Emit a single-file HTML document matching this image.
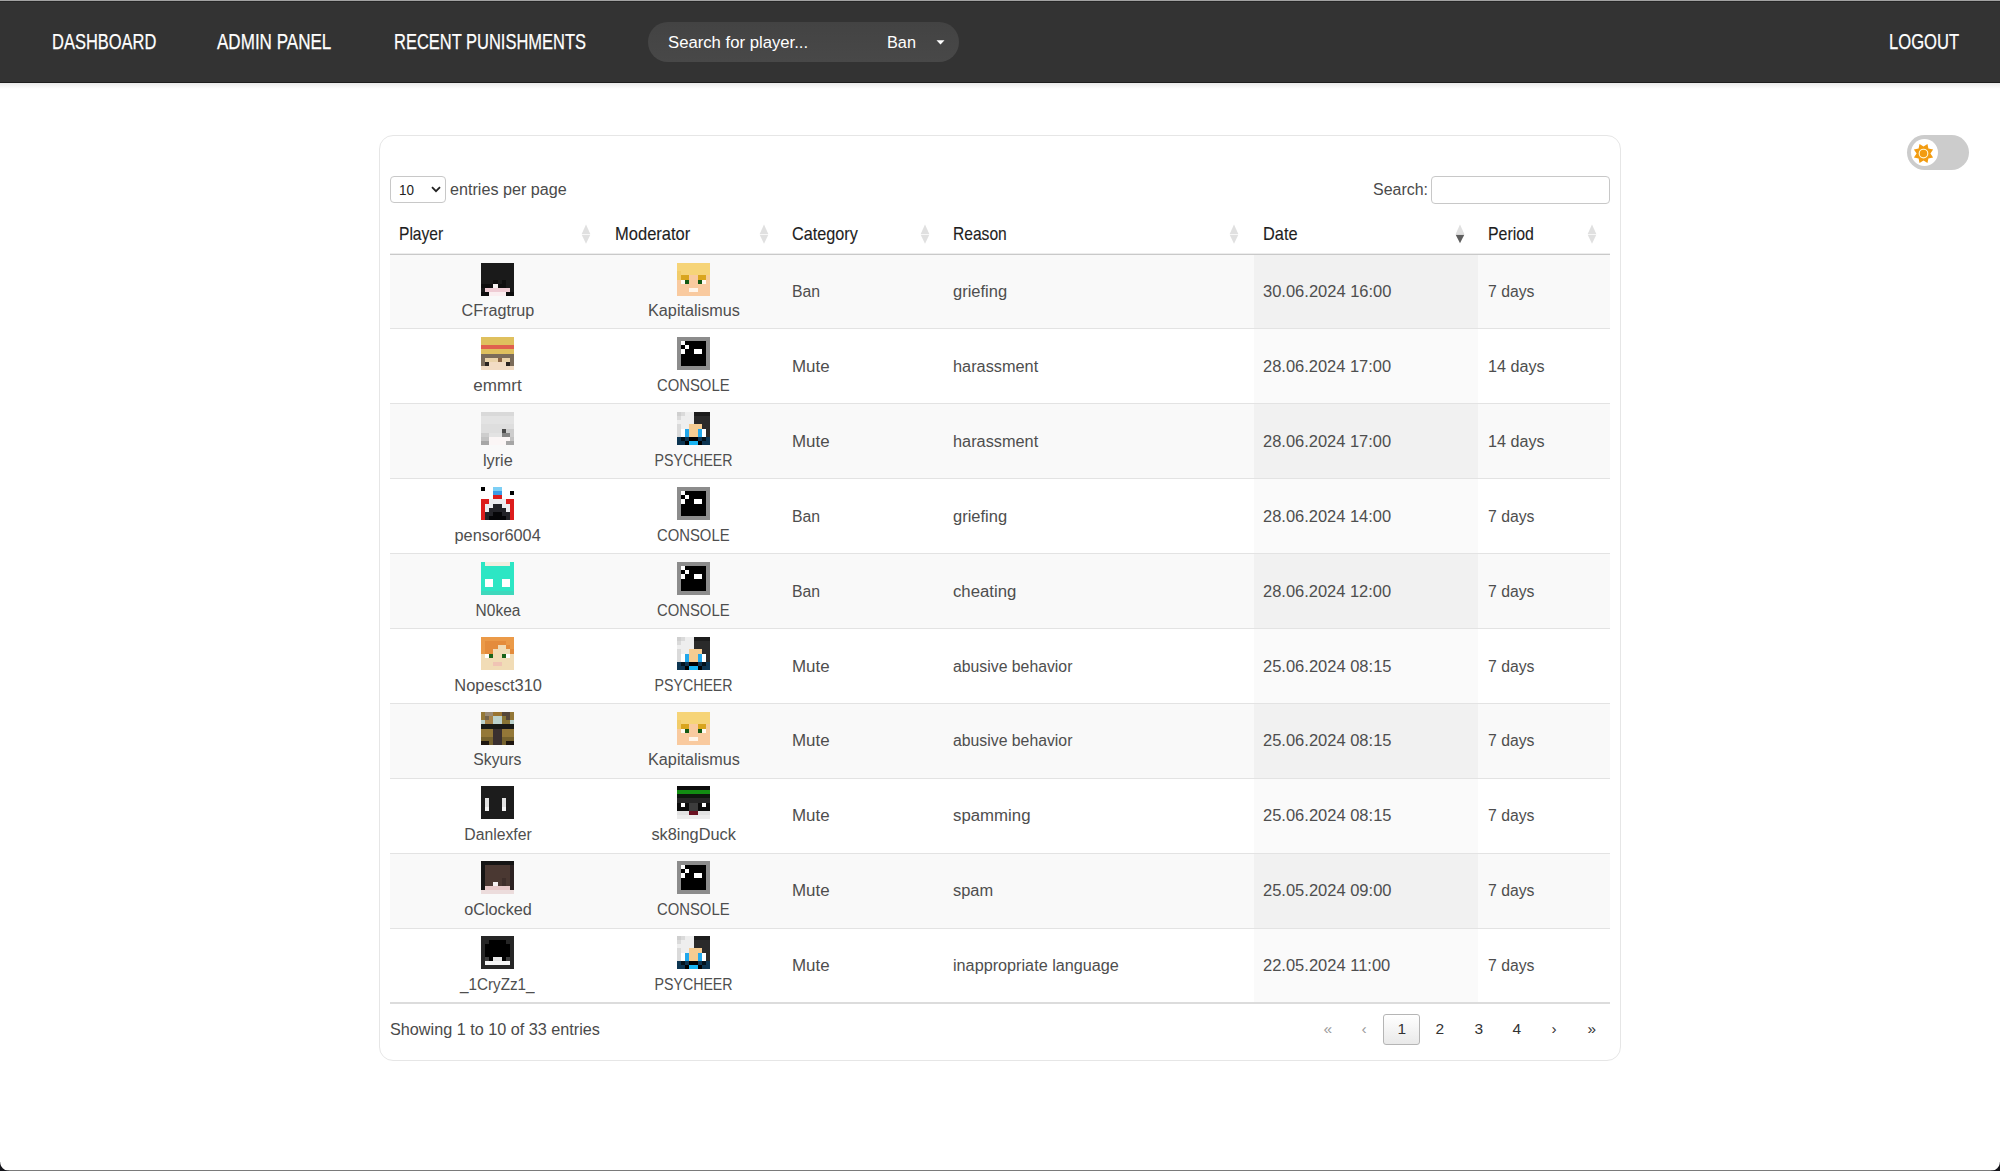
<!DOCTYPE html>
<html><head><meta charset="utf-8"><style>
html,body{margin:0;padding:0;width:2000px;height:1171px;overflow:hidden;background:#fff;font-family:"Liberation Sans",sans-serif;}
#root{position:relative;width:2000px;height:1171px;overflow:hidden;}
.nav{position:absolute;left:0;top:0;width:2000px;height:83px;background:#333333;}
.navtop{position:absolute;left:0;top:0;width:2000px;height:1px;background:#a3a3a3;}
.navtop2{position:absolute;left:0;top:1px;width:2000px;height:1px;background:#262626;}
.navbot{position:absolute;left:0;top:82px;width:2000px;height:1px;background:#1e1e1e;}
.shadow{position:absolute;left:0;top:83px;width:2000px;height:6px;background:linear-gradient(#eaeaea,#ffffff);}
.t{position:absolute;white-space:nowrap;line-height:0;}
.t span{display:inline-block;line-height:0;}
.pill{position:absolute;left:648px;top:22px;width:311px;height:40px;border-radius:20px;background:linear-gradient(#434343,#484848);}
.card{position:absolute;left:379px;top:135px;width:1240px;height:924px;border:1px solid #e6e6e6;border-radius:14px;background:#fff;}
.row{position:absolute;left:390px;width:1220px;}
.dcol{position:absolute;left:1254px;width:224px;}
.rb{position:absolute;left:390px;width:1220px;height:1px;background:#e3e3e3;}
.hb{position:absolute;left:390px;width:1220px;height:1px;top:254px;background:#c9c9c9;box-shadow:0 -1px 0 #ededed;}
.hb2{position:absolute;left:390px;width:1220px;height:2px;top:1002px;background:#dcdcdc;}
.av{position:absolute;}
.sel{position:absolute;left:390px;top:176px;width:54px;height:25px;border:1px solid #c8c8c8;border-radius:4px;background:#fff;}
.inp{position:absolute;left:1431px;top:176px;width:177px;height:26px;border:1px solid #c8c8c8;border-radius:4px;background:#fff;}
.pbox{position:absolute;left:1383px;top:1014px;width:35px;height:29px;border:1px solid #b5b5b5;border-radius:3px;background:linear-gradient(#ffffff,#e9e9e9);}
.tog{position:absolute;left:1907px;top:135px;width:62px;height:35px;border-radius:17.5px;background:#cccccc;}
.knob{position:absolute;left:1911px;top:139px;width:27px;height:27px;border-radius:50%;background:#fff;}
.arr{position:absolute;}
.bottomedge{position:absolute;left:0;top:1170px;width:2000px;height:1px;background:#7a7a7a;}
.cl{position:absolute;left:0;top:1162px;width:9px;height:9px;background:radial-gradient(circle at 9px 0px,rgba(255,255,255,0) 8.3px,#15151a 9.3px);}
.cr{position:absolute;left:1991px;top:1162px;width:9px;height:9px;background:radial-gradient(circle at 0px 0px,rgba(255,255,255,0) 8.3px,#15151a 9.3px);}
</style></head><body><div id="root">
<div class="nav"></div><div class="navtop"></div><div class="navtop2"></div><div class="navbot"></div><div class="shadow"></div>
<div class="t" style="left:51.6px;top:42.48px;font-size:21.7px;color:#ffffff;letter-spacing:0px;-webkit-text-stroke:0.25px #fff;"><span style="transform:scaleX(0.76);transform-origin:0 0">DASHBOARD</span></div>
<div class="t" style="left:216.8px;top:42.48px;font-size:21.7px;color:#ffffff;letter-spacing:0px;-webkit-text-stroke:0.25px #fff;"><span style="transform:scaleX(0.786);transform-origin:0 0">ADMIN PANEL</span></div>
<div class="t" style="left:393.6px;top:42.48px;font-size:21.7px;color:#ffffff;letter-spacing:0px;-webkit-text-stroke:0.25px #fff;"><span style="transform:scaleX(0.76);transform-origin:0 0">RECENT PUNISHMENTS</span></div>
<div class="t" style="left:1889px;top:42.48px;font-size:21.7px;color:#ffffff;letter-spacing:0px;-webkit-text-stroke:0.25px #fff;"><span style="transform:scaleX(0.765);transform-origin:0 0">LOGOUT</span></div>
<div class="pill"></div>
<div class="t" style="left:668px;top:42.88px;font-size:16.8px;color:#ffffff;letter-spacing:0px;"><span style="transform:scaleX(0.995);transform-origin:0 0">Search for player...</span></div>
<div class="t" style="left:886.5px;top:43.38px;font-size:16.8px;color:#ffffff;letter-spacing:0px;"><span style="transform:scaleX(0.97);transform-origin:0 0">Ban</span></div>
<svg class="arr" style="left:936px;top:40px" width="9" height="5" viewBox="0 0 9 5"><path d="M0.5 0.3 L8.5 0.3 L4.5 4.6 Z" fill="#fff"/></svg>
<div class="tog"></div><div class="knob"></div><svg class="arr" style="left:1903.1px;top:132.85px" width="41" height="41" viewBox="-20.5 -20.5 41 41"><path d="M3.98,-9.61 L4.88,-4.88 L9.61,-3.98 L6.90,0.00 L9.61,3.98 L4.88,4.88 L3.98,9.61 L0.00,6.90 L-3.98,9.61 L-4.88,4.88 L-9.61,3.98 L-6.90,0.00 L-9.61,-3.98 L-4.88,-4.88 L-3.98,-9.61 L-0.00,-6.90 Z" fill="#f29c11"/><circle cx="0" cy="0" r="4.3" fill="none" stroke="#fff8d8" stroke-width="1.15"/><circle cx="0" cy="0" r="3.2" fill="#f29c11"/></svg>
<div class="card"></div>
<div class="sel"></div>
<div class="t" style="left:399.3px;top:189.83px;font-size:15.5px;color:#222;letter-spacing:0px;"><span style="transform:scaleX(0.87);transform-origin:0 0">10</span></div>
<svg class="arr" style="left:431px;top:186px" width="10" height="7" viewBox="0 0 10 7"><path d="M1 1.2 L5 5.2 L9 1.2" stroke="#222" stroke-width="1.8" fill="none"/></svg>
<div class="t" style="left:449.6px;top:189.21px;font-size:17.3px;color:#4a4a4a;letter-spacing:0px;"><span style="transform:scaleX(0.934);transform-origin:0 0">entries per page</span></div>
<div class="t" style="left:1373.4px;top:189.41px;font-size:17.3px;color:#4a4a4a;letter-spacing:0px;"><span style="transform:scaleX(0.923);transform-origin:0 0">Search:</span></div>
<div class="inp"></div>
<div class="t" style="left:399.2px;top:233.59px;font-size:18.2px;color:#1e1e1e;letter-spacing:0px;-webkit-text-stroke:0.12px #1e1e1e;"><span style="transform:scaleX(0.857);transform-origin:0 0">Player</span></div>
<div class="t" style="left:614.6px;top:233.59px;font-size:18.2px;color:#1e1e1e;letter-spacing:0px;-webkit-text-stroke:0.12px #1e1e1e;"><span style="transform:scaleX(0.90842);transform-origin:0 0">Moderator</span></div>
<div class="t" style="left:792px;top:233.59px;font-size:18.2px;color:#1e1e1e;letter-spacing:0px;-webkit-text-stroke:0.12px #1e1e1e;"><span style="transform:scaleX(0.89128);transform-origin:0 0">Category</span></div>
<div class="t" style="left:953.2px;top:233.59px;font-size:18.2px;color:#1e1e1e;letter-spacing:0px;-webkit-text-stroke:0.12px #1e1e1e;"><span style="transform:scaleX(0.857);transform-origin:0 0">Reason</span></div>
<div class="t" style="left:1263px;top:233.59px;font-size:18.2px;color:#1e1e1e;letter-spacing:0px;-webkit-text-stroke:0.12px #1e1e1e;"><span style="transform:scaleX(0.89985);transform-origin:0 0">Date</span></div>
<div class="t" style="left:1488.2px;top:233.59px;font-size:18.2px;color:#1e1e1e;letter-spacing:0px;-webkit-text-stroke:0.12px #1e1e1e;"><span style="transform:scaleX(0.87414);transform-origin:0 0">Period</span></div>
<svg class="arr" style="left:581.20px;top:223.5px" width="10" height="21" viewBox="0 0 10 21"><path d="M5 0.6 L9.3 10.0 L0.7 10.0 Z" fill="#e0e0e0"/><path d="M0.7 10.8 L9.3 10.8 L5 19.8 Z" fill="#e0e0e0"/></svg><svg class="arr" style="left:758.50px;top:223.5px" width="10" height="21" viewBox="0 0 10 21"><path d="M5 0.6 L9.3 10.0 L0.7 10.0 Z" fill="#e0e0e0"/><path d="M0.7 10.8 L9.3 10.8 L5 19.8 Z" fill="#e0e0e0"/></svg><svg class="arr" style="left:920.00px;top:223.5px" width="10" height="21" viewBox="0 0 10 21"><path d="M5 0.6 L9.3 10.0 L0.7 10.0 Z" fill="#e0e0e0"/><path d="M0.7 10.8 L9.3 10.8 L5 19.8 Z" fill="#e0e0e0"/></svg><svg class="arr" style="left:1229.30px;top:223.5px" width="10" height="21" viewBox="0 0 10 21"><path d="M5 0.6 L9.3 10.0 L0.7 10.0 Z" fill="#e0e0e0"/><path d="M0.7 10.8 L9.3 10.8 L5 19.8 Z" fill="#e0e0e0"/></svg><svg class="arr" style="left:1454.80px;top:223.5px" width="10" height="21" viewBox="0 0 10 21"><path d="M5 0.6 L9.3 10.0 L0.7 10.0 Z" fill="#e0e0e0"/><path d="M0.7 10.8 L9.3 10.8 L5 19.3 Z" fill="#5e5e5e"/></svg><svg class="arr" style="left:1586.60px;top:223.5px" width="10" height="21" viewBox="0 0 10 21"><path d="M5 0.6 L9.3 10.0 L0.7 10.0 Z" fill="#e0e0e0"/><path d="M0.7 10.8 L9.3 10.8 L5 19.8 Z" fill="#e0e0e0"/></svg>
<div class="hb"></div>
<div class="row" style="top:255px;height:73px;background:#f9f9f9"></div>
<div class="dcol" style="top:255px;height:73px;background:#f1f1f1"></div>
<div class="rb" style="top:328px"></div>
<div class="row" style="top:329px;height:74px;background:#ffffff"></div>
<div class="dcol" style="top:329px;height:74px;background:#fafafa"></div>
<div class="rb" style="top:403px"></div>
<div class="row" style="top:404px;height:74px;background:#f9f9f9"></div>
<div class="dcol" style="top:404px;height:74px;background:#f1f1f1"></div>
<div class="rb" style="top:478px"></div>
<div class="row" style="top:479px;height:74px;background:#ffffff"></div>
<div class="dcol" style="top:479px;height:74px;background:#fafafa"></div>
<div class="rb" style="top:553px"></div>
<div class="row" style="top:554px;height:74px;background:#f9f9f9"></div>
<div class="dcol" style="top:554px;height:74px;background:#f1f1f1"></div>
<div class="rb" style="top:628px"></div>
<div class="row" style="top:629px;height:74px;background:#ffffff"></div>
<div class="dcol" style="top:629px;height:74px;background:#fafafa"></div>
<div class="rb" style="top:703px"></div>
<div class="row" style="top:704px;height:74px;background:#f9f9f9"></div>
<div class="dcol" style="top:704px;height:74px;background:#f1f1f1"></div>
<div class="rb" style="top:778px"></div>
<div class="row" style="top:779px;height:74px;background:#ffffff"></div>
<div class="dcol" style="top:779px;height:74px;background:#fafafa"></div>
<div class="rb" style="top:853px"></div>
<div class="row" style="top:854px;height:74px;background:#f9f9f9"></div>
<div class="dcol" style="top:854px;height:74px;background:#f1f1f1"></div>
<div class="rb" style="top:928px"></div>
<div class="row" style="top:929px;height:73px;background:#ffffff"></div>
<div class="dcol" style="top:929px;height:73px;background:#fafafa"></div>
<svg class="av" style="left:481px;top:263px" width="33" height="33" viewBox="0 0 8 8" shape-rendering="crispEdges"><rect x="0" y="0" width="8" height="1" fill="#1a1a1a"/><rect x="0" y="1" width="8" height="1" fill="#1a1a1a"/><rect x="0" y="2" width="8" height="1" fill="#1a1a1a"/><rect x="0" y="3" width="8" height="1" fill="#1a1a1a"/><rect x="0" y="4" width="3" height="1" fill="#1a1a1a"/><rect x="3" y="4" width="1" height="1" fill="#0e0e0e"/><rect x="4" y="4" width="1" height="1" fill="#1a1a1a"/><rect x="5" y="4" width="1" height="1" fill="#0e0e0e"/><rect x="6" y="4" width="2" height="1" fill="#1a1a1a"/><rect x="0" y="5" width="3" height="1" fill="#0e0e0e"/><rect x="3" y="5" width="1" height="1" fill="#f4f0f0"/><rect x="4" y="5" width="2" height="1" fill="#0e0e0e"/><rect x="6" y="5" width="2" height="1" fill="#1a1a1a"/><rect x="0" y="6" width="1" height="1" fill="#1a1a1a"/><rect x="1" y="6" width="6" height="1" fill="#efccd4"/><rect x="7" y="6" width="1" height="1" fill="#1a1a1a"/><rect x="0" y="7" width="2" height="1" fill="#0e0e0e"/><rect x="2" y="7" width="4" height="1" fill="#fbeef0"/><rect x="6" y="7" width="2" height="1" fill="#0e0e0e"/></svg>
<svg class="av" style="left:677px;top:263px" width="33" height="33" viewBox="0 0 8 8" shape-rendering="crispEdges"><rect x="0" y="0" width="8" height="1" fill="#f6d478"/><rect x="0" y="1" width="8" height="1" fill="#f6d478"/><rect x="0" y="2" width="1" height="1" fill="#f2cc6a"/><rect x="1" y="2" width="7" height="1" fill="#f6d478"/><rect x="0" y="3" width="1" height="1" fill="#f2cc6a"/><rect x="1" y="3" width="2" height="1" fill="#d9a51e"/><rect x="3" y="3" width="2" height="1" fill="#f9ca9f"/><rect x="5" y="3" width="2" height="1" fill="#d9a51e"/><rect x="7" y="3" width="1" height="1" fill="#f6cc96"/><rect x="0" y="4" width="1" height="1" fill="#f9ca9f"/><rect x="1" y="4" width="1" height="1" fill="#fffaf0"/><rect x="2" y="4" width="1" height="1" fill="#145a14"/><rect x="3" y="4" width="2" height="1" fill="#f9ca9f"/><rect x="5" y="4" width="1" height="1" fill="#145a14"/><rect x="6" y="4" width="1" height="1" fill="#fffaf0"/><rect x="7" y="4" width="1" height="1" fill="#f9ca9f"/><rect x="0" y="5" width="8" height="1" fill="#f9ca9f"/><rect x="0" y="6" width="3" height="1" fill="#f9ca9f"/><rect x="3" y="6" width="2" height="1" fill="#fff5ea"/><rect x="5" y="6" width="3" height="1" fill="#f9ca9f"/><rect x="0" y="7" width="8" height="1" fill="#f9ca9f"/></svg>
<div class="t" style="left:197.75px;width:600px;text-align:center;top:310.01px;font-size:17.3px;color:#4e4e4e;letter-spacing:0px;"><span style="transform:scaleX(0.9342);transform-origin:50% 0">CFragtrup</span></div>
<div class="t" style="left:393.5px;width:600px;text-align:center;top:310.01px;font-size:17.3px;color:#4e4e4e;letter-spacing:0px;"><span style="transform:scaleX(0.9381);transform-origin:50% 0">Kapitalismus</span></div>
<div class="t" style="left:791.8px;top:291.01px;font-size:17.3px;color:#4e4e4e;letter-spacing:0px;"><span style="transform:scaleX(0.9138);transform-origin:0 0">Ban</span></div>
<div class="t" style="left:953.3px;top:291.01px;font-size:17.3px;color:#4e4e4e;letter-spacing:0px;"><span style="transform:scaleX(0.9545);transform-origin:0 0">griefing</span></div>
<div class="t" style="left:1262.8px;top:291.01px;font-size:17.3px;color:#4e4e4e;letter-spacing:0px;"><span style="transform:scaleX(0.9549);transform-origin:0 0">30.06.2024 16:00</span></div>
<div class="t" style="left:1488.2px;top:291.01px;font-size:17.3px;color:#4e4e4e;letter-spacing:0px;"><span style="transform:scaleX(0.912);transform-origin:0 0">7 days</span></div>
<svg class="av" style="left:481px;top:337px" width="33" height="33" viewBox="0 0 8 8" shape-rendering="crispEdges"><rect x="0" y="0" width="8" height="1" fill="#dfc05e"/><rect x="0" y="1" width="8" height="1" fill="#dfc05e"/><rect x="0" y="2" width="8" height="1" fill="#e0604e"/><rect x="0" y="3" width="8" height="1" fill="#dfc05e"/><rect x="0" y="4" width="8" height="1" fill="#7b6c5a"/><rect x="0" y="5" width="1" height="1" fill="#7b6c5a"/><rect x="1" y="5" width="3" height="1" fill="#ead3aa"/><rect x="4" y="5" width="1" height="1" fill="#8a6444"/><rect x="5" y="5" width="2" height="1" fill="#ead3aa"/><rect x="7" y="5" width="1" height="1" fill="#7b6c5a"/><rect x="0" y="6" width="1" height="1" fill="#7b6c5a"/><rect x="1" y="6" width="1" height="1" fill="#2a2420"/><rect x="2" y="6" width="4" height="1" fill="#f2dcc4"/><rect x="6" y="6" width="1" height="1" fill="#2a2420"/><rect x="7" y="6" width="1" height="1" fill="#7b6c5a"/><rect x="0" y="7" width="8" height="1" fill="#f2dcc4"/></svg>
<svg class="av" style="left:677px;top:337px" width="33" height="33" viewBox="0 0 8 8" shape-rendering="crispEdges"><rect x="0" y="0" width="8" height="1" fill="#8c8c8c"/><rect x="0" y="1" width="1" height="1" fill="#8c8c8c"/><rect x="1" y="1" width="1" height="1" fill="#ffffff"/><rect x="2" y="1" width="5" height="1" fill="#000000"/><rect x="7" y="1" width="1" height="1" fill="#8c8c8c"/><rect x="0" y="2" width="1" height="1" fill="#8c8c8c"/><rect x="1" y="2" width="1" height="1" fill="#000000"/><rect x="2" y="2" width="1" height="1" fill="#ffffff"/><rect x="3" y="2" width="4" height="1" fill="#000000"/><rect x="7" y="2" width="1" height="1" fill="#8c8c8c"/><rect x="0" y="3" width="1" height="1" fill="#8c8c8c"/><rect x="1" y="3" width="1" height="1" fill="#ffffff"/><rect x="2" y="3" width="2" height="1" fill="#000000"/><rect x="4" y="3" width="2" height="1" fill="#ffffff"/><rect x="6" y="3" width="1" height="1" fill="#000000"/><rect x="7" y="3" width="1" height="1" fill="#8c8c8c"/><rect x="0" y="4" width="1" height="1" fill="#8c8c8c"/><rect x="1" y="4" width="6" height="1" fill="#000000"/><rect x="7" y="4" width="1" height="1" fill="#8c8c8c"/><rect x="0" y="5" width="1" height="1" fill="#8c8c8c"/><rect x="1" y="5" width="6" height="1" fill="#000000"/><rect x="7" y="5" width="1" height="1" fill="#8c8c8c"/><rect x="0" y="6" width="1" height="1" fill="#8c8c8c"/><rect x="1" y="6" width="6" height="1" fill="#000000"/><rect x="7" y="6" width="1" height="1" fill="#8c8c8c"/><rect x="0" y="7" width="8" height="1" fill="#8c8c8c"/></svg>
<div class="t" style="left:197.75px;width:600px;text-align:center;top:384.91px;font-size:17.3px;color:#4e4e4e;letter-spacing:0px;"><span style="transform:scaleX(0.9875);transform-origin:50% 0">emmrt</span></div>
<div class="t" style="left:393.5px;width:600px;text-align:center;top:384.91px;font-size:17.3px;color:#4e4e4e;letter-spacing:0px;"><span style="transform:scaleX(0.859);transform-origin:50% 0">CONSOLE</span></div>
<div class="t" style="left:791.8px;top:365.91px;font-size:17.3px;color:#4e4e4e;letter-spacing:0px;"><span style="transform:scaleX(0.9784);transform-origin:0 0">Mute</span></div>
<div class="t" style="left:953.3px;top:365.91px;font-size:17.3px;color:#4e4e4e;letter-spacing:0px;"><span style="transform:scaleX(0.9438);transform-origin:0 0">harassment</span></div>
<div class="t" style="left:1262.8px;top:365.91px;font-size:17.3px;color:#4e4e4e;letter-spacing:0px;"><span style="transform:scaleX(0.9526);transform-origin:0 0">28.06.2024 17:00</span></div>
<div class="t" style="left:1488.2px;top:365.91px;font-size:17.3px;color:#4e4e4e;letter-spacing:0px;"><span style="transform:scaleX(0.9356);transform-origin:0 0">14 days</span></div>
<svg class="av" style="left:481px;top:412px" width="33" height="33" viewBox="0 0 8 8" shape-rendering="crispEdges"><rect x="0" y="0" width="8" height="1" fill="#d9d9d9"/><rect x="0" y="1" width="8" height="1" fill="#e3e3e3"/><rect x="0" y="2" width="8" height="1" fill="#e3e3e3"/><rect x="0" y="3" width="8" height="1" fill="#dedede"/><rect x="0" y="4" width="5" height="1" fill="#dedede"/><rect x="5" y="4" width="1" height="1" fill="#4a4a4a"/><rect x="6" y="4" width="2" height="1" fill="#cdcdcd"/><rect x="0" y="5" width="2" height="1" fill="#cdcdcd"/><rect x="2" y="5" width="3" height="1" fill="#e3e3e3"/><rect x="5" y="5" width="2" height="1" fill="#858585"/><rect x="7" y="5" width="1" height="1" fill="#cdcdcd"/><rect x="0" y="6" width="2" height="1" fill="#c2c2c2"/><rect x="2" y="6" width="5" height="1" fill="#fbf6f6"/><rect x="7" y="6" width="1" height="1" fill="#c2c2c2"/><rect x="0" y="7" width="2" height="1" fill="#a6a6a6"/><rect x="2" y="7" width="4" height="1" fill="#fbf6f6"/><rect x="6" y="7" width="2" height="1" fill="#a6a6a6"/></svg>
<svg class="av" style="left:677px;top:412px" width="33" height="33" viewBox="0 0 8 8" shape-rendering="crispEdges"><rect x="0" y="0" width="1" height="1" fill="#cfcfcf"/><rect x="1" y="0" width="1" height="1" fill="#dadada"/><rect x="2" y="0" width="2" height="1" fill="#eeeeee"/><rect x="4" y="0" width="4" height="1" fill="#1c1c1c"/><rect x="0" y="1" width="1" height="1" fill="#dadada"/><rect x="1" y="1" width="3" height="1" fill="#eeeeee"/><rect x="4" y="1" width="4" height="1" fill="#2a2a2a"/><rect x="0" y="2" width="4" height="1" fill="#eeeeee"/><rect x="4" y="2" width="4" height="1" fill="#2a2a2a"/><rect x="0" y="3" width="1" height="1" fill="#dadada"/><rect x="1" y="3" width="2" height="1" fill="#eeeeee"/><rect x="3" y="3" width="3" height="1" fill="#f5cc92"/><rect x="6" y="3" width="2" height="1" fill="#2a2a2a"/><rect x="0" y="4" width="1" height="1" fill="#dadada"/><rect x="1" y="4" width="1" height="1" fill="#ffffff"/><rect x="2" y="4" width="1" height="1" fill="#22a8ec"/><rect x="3" y="4" width="2" height="1" fill="#f5cc92"/><rect x="5" y="4" width="1" height="1" fill="#22a8ec"/><rect x="6" y="4" width="1" height="1" fill="#ffffff"/><rect x="7" y="4" width="1" height="1" fill="#2a2a2a"/><rect x="0" y="5" width="1" height="1" fill="#dadada"/><rect x="1" y="5" width="1" height="1" fill="#ffffff"/><rect x="2" y="5" width="1" height="1" fill="#22a8ec"/><rect x="3" y="5" width="2" height="1" fill="#f5cc92"/><rect x="5" y="5" width="1" height="1" fill="#22a8ec"/><rect x="6" y="5" width="1" height="1" fill="#ffffff"/><rect x="7" y="5" width="1" height="1" fill="#2a2a2a"/><rect x="0" y="6" width="1" height="1" fill="#0c3552"/><rect x="1" y="6" width="1" height="1" fill="#03121c"/><rect x="2" y="6" width="1" height="1" fill="#0c3552"/><rect x="3" y="6" width="2" height="1" fill="#000000"/><rect x="5" y="6" width="1" height="1" fill="#0c3552"/><rect x="6" y="6" width="1" height="1" fill="#03121c"/><rect x="7" y="6" width="1" height="1" fill="#0c3552"/><rect x="0" y="7" width="2" height="1" fill="#0c3552"/><rect x="2" y="7" width="1" height="1" fill="#000000"/><rect x="3" y="7" width="2" height="1" fill="#18b4f2"/><rect x="5" y="7" width="1" height="1" fill="#000000"/><rect x="6" y="7" width="2" height="1" fill="#0c3552"/></svg>
<div class="t" style="left:197.75px;width:600px;text-align:center;top:459.81px;font-size:17.3px;color:#4e4e4e;letter-spacing:0px;"><span style="transform:scaleX(0.94);transform-origin:50% 0">lyrie</span></div>
<div class="t" style="left:393.5px;width:600px;text-align:center;top:459.81px;font-size:17.3px;color:#4e4e4e;letter-spacing:0px;"><span style="transform:scaleX(0.8215);transform-origin:50% 0">PSYCHEER</span></div>
<div class="t" style="left:791.8px;top:440.81px;font-size:17.3px;color:#4e4e4e;letter-spacing:0px;"><span style="transform:scaleX(0.9784);transform-origin:0 0">Mute</span></div>
<div class="t" style="left:953.3px;top:440.81px;font-size:17.3px;color:#4e4e4e;letter-spacing:0px;"><span style="transform:scaleX(0.9438);transform-origin:0 0">harassment</span></div>
<div class="t" style="left:1262.8px;top:440.81px;font-size:17.3px;color:#4e4e4e;letter-spacing:0px;"><span style="transform:scaleX(0.9526);transform-origin:0 0">28.06.2024 17:00</span></div>
<div class="t" style="left:1488.2px;top:440.81px;font-size:17.3px;color:#4e4e4e;letter-spacing:0px;"><span style="transform:scaleX(0.9356);transform-origin:0 0">14 days</span></div>
<svg class="av" style="left:481px;top:487px" width="33" height="33" viewBox="0 0 8 8" shape-rendering="crispEdges"><rect x="0" y="0" width="1" height="1" fill="#000000"/><rect x="3" y="0" width="2" height="1" fill="#7dcff5"/><rect x="3" y="1" width="2" height="1" fill="#3b9be6"/><rect x="7" y="1" width="1" height="1" fill="#000000"/><rect x="3" y="2" width="2" height="1" fill="#dc1c1c"/><rect x="0" y="3" width="2" height="1" fill="#dc1c1c"/><rect x="2" y="3" width="4" height="1" fill="#ececf0"/><rect x="6" y="3" width="2" height="1" fill="#dc1c1c"/><rect x="0" y="4" width="1" height="1" fill="#dc1c1c"/><rect x="1" y="4" width="2" height="1" fill="#ececf0"/><rect x="3" y="4" width="2" height="1" fill="#222228"/><rect x="5" y="4" width="2" height="1" fill="#ececf0"/><rect x="7" y="4" width="1" height="1" fill="#dc1c1c"/><rect x="0" y="5" width="1" height="1" fill="#dc1c1c"/><rect x="1" y="5" width="1" height="1" fill="#ececf0"/><rect x="2" y="5" width="4" height="1" fill="#222228"/><rect x="6" y="5" width="1" height="1" fill="#ececf0"/><rect x="7" y="5" width="1" height="1" fill="#dc1c1c"/><rect x="0" y="6" width="1" height="1" fill="#dc1c1c"/><rect x="1" y="6" width="2" height="1" fill="#222228"/><rect x="3" y="6" width="2" height="1" fill="#050508"/><rect x="5" y="6" width="2" height="1" fill="#222228"/><rect x="7" y="6" width="1" height="1" fill="#dc1c1c"/><rect x="0" y="7" width="1" height="1" fill="#dc1c1c"/><rect x="1" y="7" width="1" height="1" fill="#222228"/><rect x="2" y="7" width="4" height="1" fill="#050508"/><rect x="6" y="7" width="1" height="1" fill="#222228"/><rect x="7" y="7" width="1" height="1" fill="#dc1c1c"/></svg>
<svg class="av" style="left:677px;top:487px" width="33" height="33" viewBox="0 0 8 8" shape-rendering="crispEdges"><rect x="0" y="0" width="8" height="1" fill="#8c8c8c"/><rect x="0" y="1" width="1" height="1" fill="#8c8c8c"/><rect x="1" y="1" width="1" height="1" fill="#ffffff"/><rect x="2" y="1" width="5" height="1" fill="#000000"/><rect x="7" y="1" width="1" height="1" fill="#8c8c8c"/><rect x="0" y="2" width="1" height="1" fill="#8c8c8c"/><rect x="1" y="2" width="1" height="1" fill="#000000"/><rect x="2" y="2" width="1" height="1" fill="#ffffff"/><rect x="3" y="2" width="4" height="1" fill="#000000"/><rect x="7" y="2" width="1" height="1" fill="#8c8c8c"/><rect x="0" y="3" width="1" height="1" fill="#8c8c8c"/><rect x="1" y="3" width="1" height="1" fill="#ffffff"/><rect x="2" y="3" width="2" height="1" fill="#000000"/><rect x="4" y="3" width="2" height="1" fill="#ffffff"/><rect x="6" y="3" width="1" height="1" fill="#000000"/><rect x="7" y="3" width="1" height="1" fill="#8c8c8c"/><rect x="0" y="4" width="1" height="1" fill="#8c8c8c"/><rect x="1" y="4" width="6" height="1" fill="#000000"/><rect x="7" y="4" width="1" height="1" fill="#8c8c8c"/><rect x="0" y="5" width="1" height="1" fill="#8c8c8c"/><rect x="1" y="5" width="6" height="1" fill="#000000"/><rect x="7" y="5" width="1" height="1" fill="#8c8c8c"/><rect x="0" y="6" width="1" height="1" fill="#8c8c8c"/><rect x="1" y="6" width="6" height="1" fill="#000000"/><rect x="7" y="6" width="1" height="1" fill="#8c8c8c"/><rect x="0" y="7" width="8" height="1" fill="#8c8c8c"/></svg>
<div class="t" style="left:197.75px;width:600px;text-align:center;top:534.71px;font-size:17.3px;color:#4e4e4e;letter-spacing:0px;"><span style="transform:scaleX(0.9444);transform-origin:50% 0">pensor6004</span></div>
<div class="t" style="left:393.5px;width:600px;text-align:center;top:534.71px;font-size:17.3px;color:#4e4e4e;letter-spacing:0px;"><span style="transform:scaleX(0.859);transform-origin:50% 0">CONSOLE</span></div>
<div class="t" style="left:791.8px;top:515.71px;font-size:17.3px;color:#4e4e4e;letter-spacing:0px;"><span style="transform:scaleX(0.9138);transform-origin:0 0">Ban</span></div>
<div class="t" style="left:953.3px;top:515.71px;font-size:17.3px;color:#4e4e4e;letter-spacing:0px;"><span style="transform:scaleX(0.9545);transform-origin:0 0">griefing</span></div>
<div class="t" style="left:1262.8px;top:515.71px;font-size:17.3px;color:#4e4e4e;letter-spacing:0px;"><span style="transform:scaleX(0.9526);transform-origin:0 0">28.06.2024 14:00</span></div>
<div class="t" style="left:1488.2px;top:515.71px;font-size:17.3px;color:#4e4e4e;letter-spacing:0px;"><span style="transform:scaleX(0.912);transform-origin:0 0">7 days</span></div>
<svg class="av" style="left:481px;top:562px" width="33" height="33" viewBox="0 0 8 8" shape-rendering="crispEdges"><rect x="0" y="0" width="1" height="1" fill="#2de6c4"/><rect x="1" y="0" width="6" height="1" fill="#f3eee0"/><rect x="7" y="0" width="1" height="1" fill="#2de6c4"/><rect x="0" y="1" width="8" height="1" fill="#2de6c4"/><rect x="0" y="2" width="8" height="1" fill="#2de6c4"/><rect x="0" y="3" width="8" height="1" fill="#2de6c4"/><rect x="0" y="4" width="1" height="1" fill="#2de6c4"/><rect x="1" y="4" width="2" height="1" fill="#ffffff"/><rect x="3" y="4" width="2" height="1" fill="#2de6c4"/><rect x="5" y="4" width="2" height="1" fill="#ffffff"/><rect x="7" y="4" width="1" height="1" fill="#2de6c4"/><rect x="0" y="5" width="1" height="1" fill="#2de6c4"/><rect x="1" y="5" width="2" height="1" fill="#ffffff"/><rect x="3" y="5" width="2" height="1" fill="#2de6c4"/><rect x="5" y="5" width="2" height="1" fill="#ffffff"/><rect x="7" y="5" width="1" height="1" fill="#2de6c4"/><rect x="0" y="6" width="8" height="1" fill="#2de6c4"/><rect x="0" y="7" width="8" height="1" fill="#3ed8bc"/></svg>
<svg class="av" style="left:677px;top:562px" width="33" height="33" viewBox="0 0 8 8" shape-rendering="crispEdges"><rect x="0" y="0" width="8" height="1" fill="#8c8c8c"/><rect x="0" y="1" width="1" height="1" fill="#8c8c8c"/><rect x="1" y="1" width="1" height="1" fill="#ffffff"/><rect x="2" y="1" width="5" height="1" fill="#000000"/><rect x="7" y="1" width="1" height="1" fill="#8c8c8c"/><rect x="0" y="2" width="1" height="1" fill="#8c8c8c"/><rect x="1" y="2" width="1" height="1" fill="#000000"/><rect x="2" y="2" width="1" height="1" fill="#ffffff"/><rect x="3" y="2" width="4" height="1" fill="#000000"/><rect x="7" y="2" width="1" height="1" fill="#8c8c8c"/><rect x="0" y="3" width="1" height="1" fill="#8c8c8c"/><rect x="1" y="3" width="1" height="1" fill="#ffffff"/><rect x="2" y="3" width="2" height="1" fill="#000000"/><rect x="4" y="3" width="2" height="1" fill="#ffffff"/><rect x="6" y="3" width="1" height="1" fill="#000000"/><rect x="7" y="3" width="1" height="1" fill="#8c8c8c"/><rect x="0" y="4" width="1" height="1" fill="#8c8c8c"/><rect x="1" y="4" width="6" height="1" fill="#000000"/><rect x="7" y="4" width="1" height="1" fill="#8c8c8c"/><rect x="0" y="5" width="1" height="1" fill="#8c8c8c"/><rect x="1" y="5" width="6" height="1" fill="#000000"/><rect x="7" y="5" width="1" height="1" fill="#8c8c8c"/><rect x="0" y="6" width="1" height="1" fill="#8c8c8c"/><rect x="1" y="6" width="6" height="1" fill="#000000"/><rect x="7" y="6" width="1" height="1" fill="#8c8c8c"/><rect x="0" y="7" width="8" height="1" fill="#8c8c8c"/></svg>
<div class="t" style="left:197.75px;width:600px;text-align:center;top:609.61px;font-size:17.3px;color:#4e4e4e;letter-spacing:0px;"><span style="transform:scaleX(0.8959);transform-origin:50% 0">N0kea</span></div>
<div class="t" style="left:393.5px;width:600px;text-align:center;top:609.61px;font-size:17.3px;color:#4e4e4e;letter-spacing:0px;"><span style="transform:scaleX(0.859);transform-origin:50% 0">CONSOLE</span></div>
<div class="t" style="left:791.8px;top:590.61px;font-size:17.3px;color:#4e4e4e;letter-spacing:0px;"><span style="transform:scaleX(0.9138);transform-origin:0 0">Ban</span></div>
<div class="t" style="left:953.3px;top:590.61px;font-size:17.3px;color:#4e4e4e;letter-spacing:0px;"><span style="transform:scaleX(0.9683);transform-origin:0 0">cheating</span></div>
<div class="t" style="left:1262.8px;top:590.61px;font-size:17.3px;color:#4e4e4e;letter-spacing:0px;"><span style="transform:scaleX(0.9526);transform-origin:0 0">28.06.2024 12:00</span></div>
<div class="t" style="left:1488.2px;top:590.61px;font-size:17.3px;color:#4e4e4e;letter-spacing:0px;"><span style="transform:scaleX(0.912);transform-origin:0 0">7 days</span></div>
<svg class="av" style="left:481px;top:637px" width="33" height="33" viewBox="0 0 8 8" shape-rendering="crispEdges"><rect x="0" y="0" width="8" height="1" fill="#eb9a48"/><rect x="0" y="1" width="1" height="1" fill="#eb9a48"/><rect x="1" y="1" width="5" height="1" fill="#e48c3c"/><rect x="6" y="1" width="2" height="1" fill="#eb9a48"/><rect x="0" y="2" width="1" height="1" fill="#eb9a48"/><rect x="1" y="2" width="3" height="1" fill="#e48c3c"/><rect x="4" y="2" width="2" height="1" fill="#f1dcb6"/><rect x="6" y="2" width="1" height="1" fill="#e48c3c"/><rect x="7" y="2" width="1" height="1" fill="#eb9a48"/><rect x="0" y="3" width="1" height="1" fill="#eb9a48"/><rect x="1" y="3" width="2" height="1" fill="#e48c3c"/><rect x="3" y="3" width="4" height="1" fill="#f1dcb6"/><rect x="7" y="3" width="1" height="1" fill="#e48c3c"/><rect x="0" y="4" width="1" height="1" fill="#f1dcb6"/><rect x="1" y="4" width="1" height="1" fill="#ffffff"/><rect x="2" y="4" width="1" height="1" fill="#1a641a"/><rect x="3" y="4" width="2" height="1" fill="#f1dcb6"/><rect x="5" y="4" width="1" height="1" fill="#1a641a"/><rect x="6" y="4" width="1" height="1" fill="#ffffff"/><rect x="7" y="4" width="1" height="1" fill="#f1dcb6"/><rect x="0" y="5" width="8" height="1" fill="#f1dcb6"/><rect x="0" y="6" width="3" height="1" fill="#f1dcb6"/><rect x="3" y="6" width="2" height="1" fill="#f0c4b4"/><rect x="5" y="6" width="3" height="1" fill="#f1dcb6"/><rect x="0" y="7" width="8" height="1" fill="#f1dcb6"/></svg>
<svg class="av" style="left:677px;top:637px" width="33" height="33" viewBox="0 0 8 8" shape-rendering="crispEdges"><rect x="0" y="0" width="1" height="1" fill="#cfcfcf"/><rect x="1" y="0" width="1" height="1" fill="#dadada"/><rect x="2" y="0" width="2" height="1" fill="#eeeeee"/><rect x="4" y="0" width="4" height="1" fill="#1c1c1c"/><rect x="0" y="1" width="1" height="1" fill="#dadada"/><rect x="1" y="1" width="3" height="1" fill="#eeeeee"/><rect x="4" y="1" width="4" height="1" fill="#2a2a2a"/><rect x="0" y="2" width="4" height="1" fill="#eeeeee"/><rect x="4" y="2" width="4" height="1" fill="#2a2a2a"/><rect x="0" y="3" width="1" height="1" fill="#dadada"/><rect x="1" y="3" width="2" height="1" fill="#eeeeee"/><rect x="3" y="3" width="3" height="1" fill="#f5cc92"/><rect x="6" y="3" width="2" height="1" fill="#2a2a2a"/><rect x="0" y="4" width="1" height="1" fill="#dadada"/><rect x="1" y="4" width="1" height="1" fill="#ffffff"/><rect x="2" y="4" width="1" height="1" fill="#22a8ec"/><rect x="3" y="4" width="2" height="1" fill="#f5cc92"/><rect x="5" y="4" width="1" height="1" fill="#22a8ec"/><rect x="6" y="4" width="1" height="1" fill="#ffffff"/><rect x="7" y="4" width="1" height="1" fill="#2a2a2a"/><rect x="0" y="5" width="1" height="1" fill="#dadada"/><rect x="1" y="5" width="1" height="1" fill="#ffffff"/><rect x="2" y="5" width="1" height="1" fill="#22a8ec"/><rect x="3" y="5" width="2" height="1" fill="#f5cc92"/><rect x="5" y="5" width="1" height="1" fill="#22a8ec"/><rect x="6" y="5" width="1" height="1" fill="#ffffff"/><rect x="7" y="5" width="1" height="1" fill="#2a2a2a"/><rect x="0" y="6" width="1" height="1" fill="#0c3552"/><rect x="1" y="6" width="1" height="1" fill="#03121c"/><rect x="2" y="6" width="1" height="1" fill="#0c3552"/><rect x="3" y="6" width="2" height="1" fill="#000000"/><rect x="5" y="6" width="1" height="1" fill="#0c3552"/><rect x="6" y="6" width="1" height="1" fill="#03121c"/><rect x="7" y="6" width="1" height="1" fill="#0c3552"/><rect x="0" y="7" width="2" height="1" fill="#0c3552"/><rect x="2" y="7" width="1" height="1" fill="#000000"/><rect x="3" y="7" width="2" height="1" fill="#18b4f2"/><rect x="5" y="7" width="1" height="1" fill="#000000"/><rect x="6" y="7" width="2" height="1" fill="#0c3552"/></svg>
<div class="t" style="left:197.75px;width:600px;text-align:center;top:684.51px;font-size:17.3px;color:#4e4e4e;letter-spacing:0px;"><span style="transform:scaleX(0.9495);transform-origin:50% 0">Nopesct310</span></div>
<div class="t" style="left:393.5px;width:600px;text-align:center;top:684.51px;font-size:17.3px;color:#4e4e4e;letter-spacing:0px;"><span style="transform:scaleX(0.8215);transform-origin:50% 0">PSYCHEER</span></div>
<div class="t" style="left:791.8px;top:665.51px;font-size:17.3px;color:#4e4e4e;letter-spacing:0px;"><span style="transform:scaleX(0.9784);transform-origin:0 0">Mute</span></div>
<div class="t" style="left:953.3px;top:665.51px;font-size:17.3px;color:#4e4e4e;letter-spacing:0px;"><span style="transform:scaleX(0.9138);transform-origin:0 0">abusive behavior</span></div>
<div class="t" style="left:1262.8px;top:665.51px;font-size:17.3px;color:#4e4e4e;letter-spacing:0px;"><span style="transform:scaleX(0.955);transform-origin:0 0">25.06.2024 08:15</span></div>
<div class="t" style="left:1488.2px;top:665.51px;font-size:17.3px;color:#4e4e4e;letter-spacing:0px;"><span style="transform:scaleX(0.912);transform-origin:0 0">7 days</span></div>
<svg class="av" style="left:481px;top:712px" width="33" height="33" viewBox="0 0 8 8" shape-rendering="crispEdges"><rect x="0" y="0" width="1" height="1" fill="#947838"/><rect x="1" y="0" width="2" height="1" fill="#9a8a74"/><rect x="3" y="0" width="2" height="1" fill="#9a7430"/><rect x="5" y="0" width="2" height="1" fill="#54463a"/><rect x="7" y="0" width="1" height="1" fill="#947838"/><rect x="0" y="1" width="1" height="1" fill="#947838"/><rect x="1" y="1" width="1" height="1" fill="#74644c"/><rect x="2" y="1" width="1" height="1" fill="#a8844a"/><rect x="3" y="1" width="2" height="1" fill="#bcd2cc"/><rect x="5" y="1" width="1" height="1" fill="#887434"/><rect x="6" y="1" width="1" height="1" fill="#54463a"/><rect x="7" y="1" width="1" height="1" fill="#947838"/><rect x="0" y="2" width="1" height="1" fill="#bcd2cc"/><rect x="1" y="2" width="2" height="1" fill="#a8844a"/><rect x="3" y="2" width="2" height="1" fill="#bcd2cc"/><rect x="5" y="2" width="2" height="1" fill="#887434"/><rect x="7" y="2" width="1" height="1" fill="#bcd2cc"/><rect x="0" y="3" width="8" height="1" fill="#1a1a16"/><rect x="0" y="4" width="3" height="1" fill="#947838"/><rect x="3" y="4" width="2" height="1" fill="#3a3030"/><rect x="5" y="4" width="3" height="1" fill="#947838"/><rect x="0" y="5" width="3" height="1" fill="#947838"/><rect x="3" y="5" width="2" height="1" fill="#3a3030"/><rect x="5" y="5" width="3" height="1" fill="#947838"/><rect x="0" y="6" width="3" height="1" fill="#76622e"/><rect x="3" y="6" width="2" height="1" fill="#3a3030"/><rect x="5" y="6" width="3" height="1" fill="#76622e"/><rect x="0" y="7" width="2" height="1" fill="#1e1610"/><rect x="2" y="7" width="1" height="1" fill="#76622e"/><rect x="3" y="7" width="2" height="1" fill="#3a3030"/><rect x="5" y="7" width="1" height="1" fill="#76622e"/><rect x="6" y="7" width="2" height="1" fill="#1e1610"/></svg>
<svg class="av" style="left:677px;top:712px" width="33" height="33" viewBox="0 0 8 8" shape-rendering="crispEdges"><rect x="0" y="0" width="8" height="1" fill="#f6d478"/><rect x="0" y="1" width="8" height="1" fill="#f6d478"/><rect x="0" y="2" width="1" height="1" fill="#f2cc6a"/><rect x="1" y="2" width="7" height="1" fill="#f6d478"/><rect x="0" y="3" width="1" height="1" fill="#f2cc6a"/><rect x="1" y="3" width="2" height="1" fill="#d9a51e"/><rect x="3" y="3" width="2" height="1" fill="#f9ca9f"/><rect x="5" y="3" width="2" height="1" fill="#d9a51e"/><rect x="7" y="3" width="1" height="1" fill="#f6cc96"/><rect x="0" y="4" width="1" height="1" fill="#f9ca9f"/><rect x="1" y="4" width="1" height="1" fill="#fffaf0"/><rect x="2" y="4" width="1" height="1" fill="#145a14"/><rect x="3" y="4" width="2" height="1" fill="#f9ca9f"/><rect x="5" y="4" width="1" height="1" fill="#145a14"/><rect x="6" y="4" width="1" height="1" fill="#fffaf0"/><rect x="7" y="4" width="1" height="1" fill="#f9ca9f"/><rect x="0" y="5" width="8" height="1" fill="#f9ca9f"/><rect x="0" y="6" width="3" height="1" fill="#f9ca9f"/><rect x="3" y="6" width="2" height="1" fill="#fff5ea"/><rect x="5" y="6" width="3" height="1" fill="#f9ca9f"/><rect x="0" y="7" width="8" height="1" fill="#f9ca9f"/></svg>
<div class="t" style="left:197.75px;width:600px;text-align:center;top:759.41px;font-size:17.3px;color:#4e4e4e;letter-spacing:0px;"><span style="transform:scaleX(0.9115);transform-origin:50% 0">Skyurs</span></div>
<div class="t" style="left:393.5px;width:600px;text-align:center;top:759.41px;font-size:17.3px;color:#4e4e4e;letter-spacing:0px;"><span style="transform:scaleX(0.9381);transform-origin:50% 0">Kapitalismus</span></div>
<div class="t" style="left:791.8px;top:740.41px;font-size:17.3px;color:#4e4e4e;letter-spacing:0px;"><span style="transform:scaleX(0.9784);transform-origin:0 0">Mute</span></div>
<div class="t" style="left:953.3px;top:740.41px;font-size:17.3px;color:#4e4e4e;letter-spacing:0px;"><span style="transform:scaleX(0.9138);transform-origin:0 0">abusive behavior</span></div>
<div class="t" style="left:1262.8px;top:740.41px;font-size:17.3px;color:#4e4e4e;letter-spacing:0px;"><span style="transform:scaleX(0.955);transform-origin:0 0">25.06.2024 08:15</span></div>
<div class="t" style="left:1488.2px;top:740.41px;font-size:17.3px;color:#4e4e4e;letter-spacing:0px;"><span style="transform:scaleX(0.912);transform-origin:0 0">7 days</span></div>
<svg class="av" style="left:481px;top:786px" width="33" height="33" viewBox="0 0 8 8" shape-rendering="crispEdges"><rect x="0" y="0" width="8" height="1" fill="#1c1c1c"/><rect x="0" y="1" width="8" height="1" fill="#1c1c1c"/><rect x="0" y="2" width="8" height="1" fill="#1c1c1c"/><rect x="0" y="3" width="1" height="1" fill="#1c1c1c"/><rect x="1" y="3" width="1" height="1" fill="#e2e2e2"/><rect x="2" y="3" width="3" height="1" fill="#1c1c1c"/><rect x="5" y="3" width="1" height="1" fill="#e2e2e2"/><rect x="6" y="3" width="2" height="1" fill="#1c1c1c"/><rect x="0" y="4" width="1" height="1" fill="#1c1c1c"/><rect x="1" y="4" width="1" height="1" fill="#e2e2e2"/><rect x="2" y="4" width="3" height="1" fill="#1c1c1c"/><rect x="5" y="4" width="1" height="1" fill="#e2e2e2"/><rect x="6" y="4" width="2" height="1" fill="#1c1c1c"/><rect x="0" y="5" width="1" height="1" fill="#1c1c1c"/><rect x="1" y="5" width="1" height="1" fill="#f4f4f4"/><rect x="2" y="5" width="3" height="1" fill="#1c1c1c"/><rect x="5" y="5" width="1" height="1" fill="#f4f4f4"/><rect x="6" y="5" width="2" height="1" fill="#1c1c1c"/><rect x="0" y="6" width="8" height="1" fill="#1c1c1c"/><rect x="0" y="7" width="8" height="1" fill="#1c1c1c"/></svg>
<svg class="av" style="left:677px;top:786px" width="33" height="33" viewBox="0 0 8 8" shape-rendering="crispEdges"><rect x="0" y="0" width="8" height="1" fill="#0c0c0c"/><rect x="0" y="1" width="8" height="1" fill="#128c12"/><rect x="0" y="2" width="8" height="1" fill="#0e160e"/><rect x="0" y="3" width="8" height="1" fill="#262626"/><rect x="0" y="4" width="1" height="1" fill="#0c0c0c"/><rect x="1" y="4" width="1" height="1" fill="#ffffff"/><rect x="2" y="4" width="1" height="1" fill="#0c0c0c"/><rect x="3" y="4" width="2" height="1" fill="#3c3c3c"/><rect x="5" y="4" width="1" height="1" fill="#0c0c0c"/><rect x="6" y="4" width="1" height="1" fill="#ffffff"/><rect x="7" y="4" width="1" height="1" fill="#0c0c0c"/><rect x="0" y="5" width="3" height="1" fill="#0c0c0c"/><rect x="3" y="5" width="2" height="1" fill="#3c3c3c"/><rect x="5" y="5" width="3" height="1" fill="#0c0c0c"/><rect x="0" y="6" width="3" height="1" fill="#e2e2e2"/><rect x="3" y="6" width="2" height="1" fill="#6a1222"/><rect x="5" y="6" width="3" height="1" fill="#e2e2e2"/><rect x="0" y="7" width="8" height="1" fill="#ececec"/></svg>
<div class="t" style="left:197.75px;width:600px;text-align:center;top:834.31px;font-size:17.3px;color:#4e4e4e;letter-spacing:0px;"><span style="transform:scaleX(0.9123);transform-origin:50% 0">Danlexfer</span></div>
<div class="t" style="left:393.5px;width:600px;text-align:center;top:834.31px;font-size:17.3px;color:#4e4e4e;letter-spacing:0px;"><span style="transform:scaleX(0.9455);transform-origin:50% 0">sk8ingDuck</span></div>
<div class="t" style="left:791.8px;top:815.31px;font-size:17.3px;color:#4e4e4e;letter-spacing:0px;"><span style="transform:scaleX(0.9784);transform-origin:0 0">Mute</span></div>
<div class="t" style="left:953.3px;top:815.31px;font-size:17.3px;color:#4e4e4e;letter-spacing:0px;"><span style="transform:scaleX(0.9718);transform-origin:0 0">spamming</span></div>
<div class="t" style="left:1262.8px;top:815.31px;font-size:17.3px;color:#4e4e4e;letter-spacing:0px;"><span style="transform:scaleX(0.955);transform-origin:0 0">25.06.2024 08:15</span></div>
<div class="t" style="left:1488.2px;top:815.31px;font-size:17.3px;color:#4e4e4e;letter-spacing:0px;"><span style="transform:scaleX(0.912);transform-origin:0 0">7 days</span></div>
<svg class="av" style="left:481px;top:861px" width="33" height="33" viewBox="0 0 8 8" shape-rendering="crispEdges"><rect x="0" y="0" width="8" height="1" fill="#151515"/><rect x="0" y="1" width="1" height="1" fill="#151515"/><rect x="1" y="1" width="6" height="1" fill="#4a3832"/><rect x="7" y="1" width="1" height="1" fill="#2c2222"/><rect x="0" y="2" width="1" height="1" fill="#151515"/><rect x="1" y="2" width="6" height="1" fill="#4a3832"/><rect x="7" y="2" width="1" height="1" fill="#2c2222"/><rect x="0" y="3" width="1" height="1" fill="#151515"/><rect x="1" y="3" width="6" height="1" fill="#4a3832"/><rect x="7" y="3" width="1" height="1" fill="#2c2222"/><rect x="0" y="4" width="1" height="1" fill="#151515"/><rect x="1" y="4" width="4" height="1" fill="#4a3832"/><rect x="5" y="4" width="1" height="1" fill="#3e2e2a"/><rect x="6" y="4" width="1" height="1" fill="#4a3832"/><rect x="7" y="4" width="1" height="1" fill="#2c2222"/><rect x="0" y="5" width="1" height="1" fill="#151515"/><rect x="1" y="5" width="2" height="1" fill="#4a3832"/><rect x="3" y="5" width="1" height="1" fill="#f4f0f0"/><rect x="4" y="5" width="1" height="1" fill="#4a3832"/><rect x="5" y="5" width="1" height="1" fill="#3e2e2a"/><rect x="6" y="5" width="1" height="1" fill="#4a3832"/><rect x="7" y="5" width="1" height="1" fill="#2c2222"/><rect x="0" y="6" width="1" height="1" fill="#151515"/><rect x="1" y="6" width="6" height="1" fill="#e6c8c8"/><rect x="7" y="6" width="1" height="1" fill="#2c2222"/><rect x="0" y="7" width="8" height="1" fill="#ecdcdc"/></svg>
<svg class="av" style="left:677px;top:861px" width="33" height="33" viewBox="0 0 8 8" shape-rendering="crispEdges"><rect x="0" y="0" width="8" height="1" fill="#8c8c8c"/><rect x="0" y="1" width="1" height="1" fill="#8c8c8c"/><rect x="1" y="1" width="1" height="1" fill="#ffffff"/><rect x="2" y="1" width="5" height="1" fill="#000000"/><rect x="7" y="1" width="1" height="1" fill="#8c8c8c"/><rect x="0" y="2" width="1" height="1" fill="#8c8c8c"/><rect x="1" y="2" width="1" height="1" fill="#000000"/><rect x="2" y="2" width="1" height="1" fill="#ffffff"/><rect x="3" y="2" width="4" height="1" fill="#000000"/><rect x="7" y="2" width="1" height="1" fill="#8c8c8c"/><rect x="0" y="3" width="1" height="1" fill="#8c8c8c"/><rect x="1" y="3" width="1" height="1" fill="#ffffff"/><rect x="2" y="3" width="2" height="1" fill="#000000"/><rect x="4" y="3" width="2" height="1" fill="#ffffff"/><rect x="6" y="3" width="1" height="1" fill="#000000"/><rect x="7" y="3" width="1" height="1" fill="#8c8c8c"/><rect x="0" y="4" width="1" height="1" fill="#8c8c8c"/><rect x="1" y="4" width="6" height="1" fill="#000000"/><rect x="7" y="4" width="1" height="1" fill="#8c8c8c"/><rect x="0" y="5" width="1" height="1" fill="#8c8c8c"/><rect x="1" y="5" width="6" height="1" fill="#000000"/><rect x="7" y="5" width="1" height="1" fill="#8c8c8c"/><rect x="0" y="6" width="1" height="1" fill="#8c8c8c"/><rect x="1" y="6" width="6" height="1" fill="#000000"/><rect x="7" y="6" width="1" height="1" fill="#8c8c8c"/><rect x="0" y="7" width="8" height="1" fill="#8c8c8c"/></svg>
<div class="t" style="left:197.75px;width:600px;text-align:center;top:909.21px;font-size:17.3px;color:#4e4e4e;letter-spacing:0px;"><span style="transform:scaleX(0.9386);transform-origin:50% 0">oClocked</span></div>
<div class="t" style="left:393.5px;width:600px;text-align:center;top:909.21px;font-size:17.3px;color:#4e4e4e;letter-spacing:0px;"><span style="transform:scaleX(0.859);transform-origin:50% 0">CONSOLE</span></div>
<div class="t" style="left:791.8px;top:890.21px;font-size:17.3px;color:#4e4e4e;letter-spacing:0px;"><span style="transform:scaleX(0.9784);transform-origin:0 0">Mute</span></div>
<div class="t" style="left:953.3px;top:890.21px;font-size:17.3px;color:#4e4e4e;letter-spacing:0px;"><span style="transform:scaleX(0.95);transform-origin:0 0">spam</span></div>
<div class="t" style="left:1262.8px;top:890.21px;font-size:17.3px;color:#4e4e4e;letter-spacing:0px;"><span style="transform:scaleX(0.955);transform-origin:0 0">25.05.2024 09:00</span></div>
<div class="t" style="left:1488.2px;top:890.21px;font-size:17.3px;color:#4e4e4e;letter-spacing:0px;"><span style="transform:scaleX(0.912);transform-origin:0 0">7 days</span></div>
<svg class="av" style="left:481px;top:936px" width="33" height="33" viewBox="0 0 8 8" shape-rendering="crispEdges"><rect x="0" y="0" width="8" height="1" fill="#262626"/><rect x="0" y="1" width="2" height="1" fill="#262626"/><rect x="2" y="1" width="4" height="1" fill="#000000"/><rect x="6" y="1" width="2" height="1" fill="#262626"/><rect x="0" y="2" width="1" height="1" fill="#262626"/><rect x="1" y="2" width="6" height="1" fill="#000000"/><rect x="7" y="2" width="1" height="1" fill="#262626"/><rect x="0" y="3" width="1" height="1" fill="#262626"/><rect x="1" y="3" width="6" height="1" fill="#000000"/><rect x="7" y="3" width="1" height="1" fill="#262626"/><rect x="0" y="4" width="1" height="1" fill="#262626"/><rect x="1" y="4" width="6" height="1" fill="#000000"/><rect x="7" y="4" width="1" height="1" fill="#262626"/><rect x="0" y="5" width="1" height="1" fill="#262626"/><rect x="1" y="5" width="1" height="1" fill="#3c3c3c"/><rect x="2" y="5" width="1" height="1" fill="#000000"/><rect x="3" y="5" width="2" height="1" fill="#e6e6e6"/><rect x="5" y="5" width="1" height="1" fill="#000000"/><rect x="6" y="5" width="1" height="1" fill="#3c3c3c"/><rect x="7" y="5" width="1" height="1" fill="#262626"/><rect x="0" y="6" width="1" height="1" fill="#262626"/><rect x="1" y="6" width="6" height="1" fill="#f6f6f6"/><rect x="7" y="6" width="1" height="1" fill="#262626"/><rect x="0" y="7" width="8" height="1" fill="#262626"/></svg>
<svg class="av" style="left:677px;top:936px" width="33" height="33" viewBox="0 0 8 8" shape-rendering="crispEdges"><rect x="0" y="0" width="1" height="1" fill="#cfcfcf"/><rect x="1" y="0" width="1" height="1" fill="#dadada"/><rect x="2" y="0" width="2" height="1" fill="#eeeeee"/><rect x="4" y="0" width="4" height="1" fill="#1c1c1c"/><rect x="0" y="1" width="1" height="1" fill="#dadada"/><rect x="1" y="1" width="3" height="1" fill="#eeeeee"/><rect x="4" y="1" width="4" height="1" fill="#2a2a2a"/><rect x="0" y="2" width="4" height="1" fill="#eeeeee"/><rect x="4" y="2" width="4" height="1" fill="#2a2a2a"/><rect x="0" y="3" width="1" height="1" fill="#dadada"/><rect x="1" y="3" width="2" height="1" fill="#eeeeee"/><rect x="3" y="3" width="3" height="1" fill="#f5cc92"/><rect x="6" y="3" width="2" height="1" fill="#2a2a2a"/><rect x="0" y="4" width="1" height="1" fill="#dadada"/><rect x="1" y="4" width="1" height="1" fill="#ffffff"/><rect x="2" y="4" width="1" height="1" fill="#22a8ec"/><rect x="3" y="4" width="2" height="1" fill="#f5cc92"/><rect x="5" y="4" width="1" height="1" fill="#22a8ec"/><rect x="6" y="4" width="1" height="1" fill="#ffffff"/><rect x="7" y="4" width="1" height="1" fill="#2a2a2a"/><rect x="0" y="5" width="1" height="1" fill="#dadada"/><rect x="1" y="5" width="1" height="1" fill="#ffffff"/><rect x="2" y="5" width="1" height="1" fill="#22a8ec"/><rect x="3" y="5" width="2" height="1" fill="#f5cc92"/><rect x="5" y="5" width="1" height="1" fill="#22a8ec"/><rect x="6" y="5" width="1" height="1" fill="#ffffff"/><rect x="7" y="5" width="1" height="1" fill="#2a2a2a"/><rect x="0" y="6" width="1" height="1" fill="#0c3552"/><rect x="1" y="6" width="1" height="1" fill="#03121c"/><rect x="2" y="6" width="1" height="1" fill="#0c3552"/><rect x="3" y="6" width="2" height="1" fill="#000000"/><rect x="5" y="6" width="1" height="1" fill="#0c3552"/><rect x="6" y="6" width="1" height="1" fill="#03121c"/><rect x="7" y="6" width="1" height="1" fill="#0c3552"/><rect x="0" y="7" width="2" height="1" fill="#0c3552"/><rect x="2" y="7" width="1" height="1" fill="#000000"/><rect x="3" y="7" width="2" height="1" fill="#18b4f2"/><rect x="5" y="7" width="1" height="1" fill="#000000"/><rect x="6" y="7" width="2" height="1" fill="#0c3552"/></svg>
<div class="t" style="left:197.75px;width:600px;text-align:center;top:984.11px;font-size:17.3px;color:#4e4e4e;letter-spacing:0px;"><span style="transform:scaleX(0.8824);transform-origin:50% 0">_1CryZz1_</span></div>
<div class="t" style="left:393.5px;width:600px;text-align:center;top:984.11px;font-size:17.3px;color:#4e4e4e;letter-spacing:0px;"><span style="transform:scaleX(0.8215);transform-origin:50% 0">PSYCHEER</span></div>
<div class="t" style="left:791.8px;top:965.11px;font-size:17.3px;color:#4e4e4e;letter-spacing:0px;"><span style="transform:scaleX(0.9784);transform-origin:0 0">Mute</span></div>
<div class="t" style="left:953.3px;top:965.11px;font-size:17.3px;color:#4e4e4e;letter-spacing:0px;"><span style="transform:scaleX(0.9383);transform-origin:0 0">inappropriate language</span></div>
<div class="t" style="left:1262.8px;top:965.11px;font-size:17.3px;color:#4e4e4e;letter-spacing:0px;"><span style="transform:scaleX(0.955);transform-origin:0 0">22.05.2024 11:00</span></div>
<div class="t" style="left:1488.2px;top:965.11px;font-size:17.3px;color:#4e4e4e;letter-spacing:0px;"><span style="transform:scaleX(0.912);transform-origin:0 0">7 days</span></div>
<div class="hb2"></div>
<div class="t" style="left:389.6px;top:1029.31px;font-size:17.3px;color:#4a4a4a;letter-spacing:0px;"><span style="transform:scaleX(0.938);transform-origin:0 0">Showing 1 to 10 of 33 entries</span></div>
<div class="pbox"></div>
<div class="t" style="left:1323.5px;top:1028.63px;font-size:15.5px;color:#9a9a9a;letter-spacing:0px;"><span style="transform:scaleX(1);transform-origin:0 0">«</span></div>
<div class="t" style="left:1361.5px;top:1028.63px;font-size:15.5px;color:#9a9a9a;letter-spacing:0px;"><span style="transform:scaleX(1);transform-origin:0 0">‹</span></div>
<div class="t" style="left:1397.5px;top:1028.63px;font-size:15.5px;color:#333;letter-spacing:0px;"><span style="transform:scaleX(1);transform-origin:0 0">1</span></div>
<div class="t" style="left:1435.5px;top:1028.63px;font-size:15.5px;color:#333;letter-spacing:0px;"><span style="transform:scaleX(1);transform-origin:0 0">2</span></div>
<div class="t" style="left:1474.5px;top:1028.63px;font-size:15.5px;color:#333;letter-spacing:0px;"><span style="transform:scaleX(1);transform-origin:0 0">3</span></div>
<div class="t" style="left:1512.5px;top:1028.63px;font-size:15.5px;color:#333;letter-spacing:0px;"><span style="transform:scaleX(1);transform-origin:0 0">4</span></div>
<div class="t" style="left:1551.5px;top:1028.63px;font-size:15.5px;color:#333;letter-spacing:0px;"><span style="transform:scaleX(1);transform-origin:0 0">›</span></div>
<div class="t" style="left:1587.5px;top:1028.63px;font-size:15.5px;color:#333;letter-spacing:0px;"><span style="transform:scaleX(1);transform-origin:0 0">»</span></div>
<div class="bottomedge"></div><div class="cl"></div><div class="cr"></div>
</div></body></html>
